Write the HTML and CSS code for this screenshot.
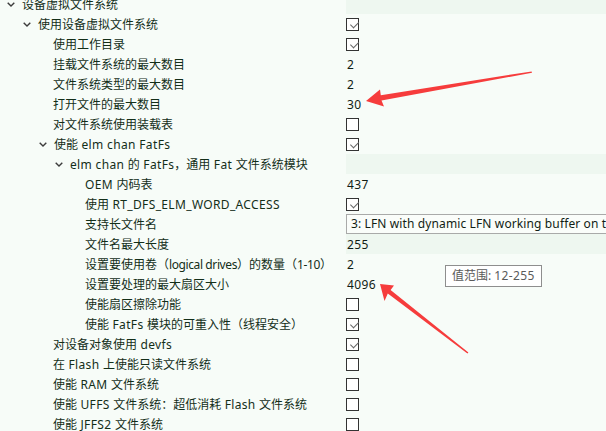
FILE: index.html
```html
<!DOCTYPE html>
<html lang="zh-CN">
<head>
<meta charset="utf-8">
<title>设备虚拟文件系统</title>
<link rel="stylesheet" href="styles.css">
</head>
<body>
<div class="tree">
  <div class="row"><div class="label l0"><span class="chev"><svg viewBox="0 0 8 5" width="8" height="5"><path d="M0.7 0.7 L4 4 L7.3 0.7"/></svg></span>设备虚拟文件系统</div><div class="value hl"></div></div>
  <div class="row"><div class="label l1"><span class="chev"><svg viewBox="0 0 8 5" width="8" height="5"><path d="M0.7 0.7 L4 4 L7.3 0.7"/></svg></span>使用设备虚拟文件系统</div><div class="value"><span class="cb on"></span></div></div>
  <div class="row"><div class="label l2">使用工作目录</div><div class="value"><span class="cb on"></span></div></div>
  <div class="row"><div class="label l2">挂载文件系统的最大数目</div><div class="value">2</div></div>
  <div class="row"><div class="label l2">文件系统类型的最大数目</div><div class="value">2</div></div>
  <div class="row"><div class="label l2">打开文件的最大数目</div><div class="value lat">30</div></div>
  <div class="row"><div class="label l2">对文件系统使用装载表</div><div class="value"><span class="cb"></span></div></div>
  <div class="row"><div class="label l2c"><span class="chev"><svg viewBox="0 0 8 5" width="8" height="5"><path d="M0.7 0.7 L4 4 L7.3 0.7"/></svg></span>使能<span class="lat"> elm chan FatFs</span></div><div class="value"><span class="cb on"></span></div></div>
  <div class="row"><div class="label l3"><span class="chev"><svg viewBox="0 0 8 5" width="8" height="5"><path d="M0.7 0.7 L4 4 L7.3 0.7"/></svg></span><span class="lat">elm chan </span>的<span class="lat"> FatFs</span>，通用<span class="lat"> Fat </span>文件系统模块</div><div class="value hl"></div></div>
  <div class="row"><div class="label l4"><span class="lat">OEM </span>内码表</div><div class="value lat">437</div></div>
  <div class="row"><div class="label l4">使用<span class="lat"> RT_DFS_ELM_WORD_ACCESS</span></div><div class="value"><span class="cb on"></span></div></div>
  <div class="row"><div class="label l4">支持长文件名</div><div class="value"><div class="combo">3: LFN with dynamic LFN working buffer on the heap</div></div></div>
  <div class="row"><div class="label l4">文件名最大长度</div><div class="value hl lat">255</div></div>
  <div class="row"><div class="label l4">设置要使用卷（<span class="nar">logical drives</span>）的数量（<span class="nar">1-10</span>）</div><div class="value">2</div></div>
  <div class="row"><div class="label l4">设置要处理的最大扇区大小</div><div class="value lat">4096</div></div>
  <div class="row"><div class="label l4">使能扇区擦除功能</div><div class="value"><span class="cb"></span></div></div>
  <div class="row"><div class="label l4">使能<span class="lat"> FatFs </span>模块的可重入性（线程安全）</div><div class="value"><span class="cb on"></span></div></div>
  <div class="row"><div class="label l2">对设备对象使用<span class="lat"> devfs</span></div><div class="value"><span class="cb on"></span></div></div>
  <div class="row"><div class="label l2">在<span class="lat"> Flash </span>上使能只读文件系统</div><div class="value"><span class="cb"></span></div></div>
  <div class="row"><div class="label l2">使能<span class="lat"> RAM </span>文件系统</div><div class="value"><span class="cb"></span></div></div>
  <div class="row"><div class="label l2">使能<span class="lat"> UFFS </span>文件系统：超低消耗<span class="lat"> Flash </span>文件系统</div><div class="value"><span class="cb"></span></div></div>
  <div class="row"><div class="label l2">使能<span class="lat"> JFFS2 </span>文件系统</div><div class="value"><span class="cb"></span></div></div>
</div>
<div class="tooltip">值范围: <span class="lat">12-255</span></div>
<svg class="arrows" width="606" height="431" viewBox="0 0 606 431">
  <polygon points="366,101 384,106.5 381.5,100.5 532,72.8 531.6,71.4 380.8,95.2 380,89.5"/>
  <polygon points="380,284 394,285.5 390.6,290 468.4,352.6 467.4,353.4 387.8,293.6 384.5,301"/>
</svg>
</body>
</html>
```
FILE: styles.css
```css
html, body {
  margin: 0;
  padding: 0;
  width: 606px;
  height: 431px;
  overflow: hidden;
  background: #f7fcf8;
}
body {
  position: relative;
  font-family: "Noto Sans", "Noto Sans CJK SC", sans-serif;
  font-size: 12px;
  color: #132e18;
}
.lat {
  letter-spacing: 0.35px;
}
.nar {
  letter-spacing: -0.4px;
}
.tree {
  display: flex;
  flex-direction: column;
  margin-top: -6px;
}
.row {
  display: flex;
  height: 20px;
  align-items: stretch;
}
.label {
  width: 346px;
  flex: none;
  display: flex;
  align-items: center;
  white-space: pre;
  overflow: hidden;
  box-sizing: border-box;
}
.l0 { padding-left: 7px; }
.l1 { padding-left: 23px; }
.l2 { padding-left: 53px; }
.l2c { padding-left: 39px; }
.l3 { padding-left: 55px; }
.l4 { padding-left: 85px; }
.chev {
  width: 15px;
  flex: none;
  display: flex;
  align-items: center;
}
.chev svg path {
  fill: none;
  stroke: #3c3c3c;
  stroke-width: 1.4;
}
.value {
  flex: 1;
  display: flex;
  align-items: center;
  min-width: 0;
  padding-left: 1px;
  color: #111d14;
}
.value.hl {
  background: #eef7f0;
}
.cb {
  width: 11px;
  height: 11px;
  border: 1px solid #333;
  background: #fff;
  position: relative;
  margin-left: -1px;
}
.cb.on::after {
  content: "";
  position: absolute;
  left: 2px;
  top: 1px;
  width: 7px;
  height: 3.5px;
  border-left: 1.2px solid #666;
  border-bottom: 1.2px solid #666;
  transform: rotate(-45deg) translate(0px, 2px);
}
.combo {
  margin-left: -1px;
  flex: 1;
  height: 18px;
  border: 1px solid #a9aaa9;
  background: #fafdfa;
  white-space: nowrap;
  overflow: hidden;
  padding-left: 4px;
  line-height: 18px;
  margin-right: -40px;
  letter-spacing: 0.12px;
}
.tooltip {
  position: absolute;
  left: 445px;
  top: 265px;
  height: 20px;
  width: 89px;
  border: 1px solid #8e8e8e;
  background: #fff;
  color: #5a5a5a;
  line-height: 20px;
  padding-left: 6px;
}
.arrows {
  position: absolute;
  left: 0;
  top: 0;
  pointer-events: none;
}
.arrows polygon {
  fill: #f63c3c;
}
```
